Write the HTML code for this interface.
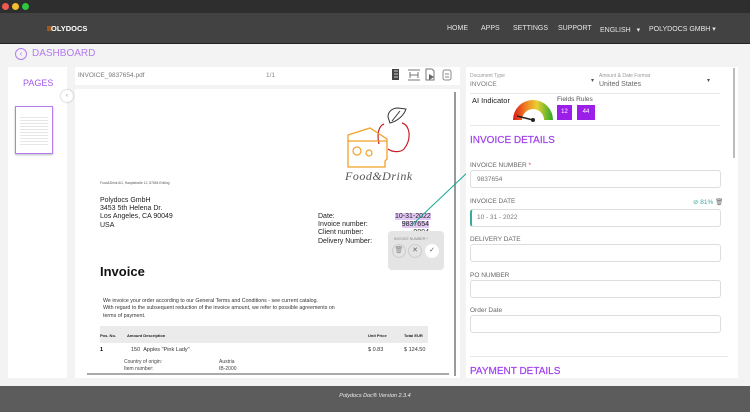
<!DOCTYPE html>
<html><head><meta charset="utf-8"><style>
*{margin:0;padding:0;box-sizing:border-box}
body{width:750px;height:412px;overflow:hidden;background:#f3f3f3;font-family:"Liberation Sans",sans-serif;position:relative}
.a{position:absolute;white-space:nowrap}
.nav{color:#e6e6e6;font-size:7px;top:25px}
.lbl{font-size:6.5px;color:#666}
.inp{position:absolute;left:470px;width:251px;height:18px;border:1px solid #ddd;border-radius:3px;background:#fff}
.dt{font-size:7px;color:#222;line-height:8.2px}
</style></head><body>
<div class="a" style="left:0;top:0;width:750px;height:13px;background:#2e2e2e"></div>
<div class="a" style="left:2px;top:3px;width:7px;height:7px;border-radius:50%;background:#ee5a52"></div>
<div class="a" style="left:12px;top:3px;width:7px;height:7px;border-radius:50%;background:#f4bf2f"></div>
<div class="a" style="left:22px;top:3px;width:7px;height:7px;border-radius:50%;background:#2fc73f"></div>
<div class="a" style="left:0;top:13px;width:750px;height:31px;background:#424242;border-bottom:1px solid #222"></div>
<div class="a" style="left:47px;top:26px;width:5px;height:5px;background:#9b5a1c"></div>
<div class="a" style="left:51px;top:24px;color:#fff;font-size:7.5px;font-weight:bold">OLYDOCS</div>
<div class="a nav" style="left:447px">HOME</div>
<div class="a nav" style="left:481px">APPS</div>
<div class="a nav" style="left:513px">SETTINGS</div>
<div class="a nav" style="left:558px">SUPPORT</div>
<div class="a nav" style="left:600px;top:26px">ENGLISH &nbsp;&nbsp;▾</div>
<div class="a nav" style="left:649px">POLYDOCS GMBH ▾</div>

<div class="a" style="left:15px;top:48px;width:12px;height:12px;border:1.3px solid #b57bf0;border-radius:50%;color:#b57bf0;font-size:8px;line-height:9px;text-align:center">‹</div>
<div class="a" style="left:32px;top:48px;color:#b57bf0;font-size:10px">DASHBOARD</div>

<div class="a" style="left:8px;top:67px;width:59px;height:311px;background:#fff"></div>
<div class="a" style="left:23px;top:78px;color:#a25bf0;font-size:9px">PAGES</div>
<div class="a" style="left:15px;top:106px;width:38px;height:48px;border:1px solid #b57bf0;background:#fff;box-shadow:0 1px 2px #bbb"></div>
<div class="a" style="left:20px;top:115px;width:28px;height:30px;background:repeating-linear-gradient(#fff 0 2px,#e6e6e6 2px 3px)"></div>
<div class="a" style="left:61px;top:90px;width:12px;height:12px;border-radius:50%;background:#fff;box-shadow:0 0 2px #aaa;color:#888;font-size:6px;text-align:center;line-height:12px">‹</div>

<div class="a" style="left:75px;top:67px;width:385px;height:18px;background:#fff"></div>
<div class="a" style="left:78px;top:72px;font-size:6.5px;color:#777">INVOICE_9837654.pdf</div>
<div class="a" style="left:266px;top:72px;font-size:6.5px;color:#888">1/1</div>
<svg class="a" style="left:391px;top:68px" width="66" height="14">
<rect x="1" y="1" width="7" height="11" fill="#444"/><path d="M3 3h4M3 6h4M3 9h4" stroke="#fff" stroke-width=".8"/>
<path d="M17 2h12M17 12h12M19 4v6M27 4v6M19 7h8" stroke="#777" stroke-width="1" fill="none"/>
<path d="M35 1h6l2 2v9h-8z" fill="none" stroke="#777"/><path d="M38 6l5 3-5 3z" fill="#666"/>
<rect x="52" y="2" width="8" height="10" rx="2" fill="none" stroke="#888"/><path d="M54 6h4M54 9h4" stroke="#888"/>
</svg>

<div class="a" style="left:75px;top:89px;width:385px;height:289px;background:#fff"></div>
<div class="a" style="left:454px;top:92px;width:2px;height:284px;background:#999"></div>
<div class="a" style="left:87px;top:373px;width:362px;height:2px;background:#aaa"></div>

<svg class="a" style="left:342px;top:105px" width="85" height="78">
<path d="M46 12c0-6 5-9 10-9l8 1c-2 6-8 12-16 14z M50 16l8-10" fill="none" stroke="#333" stroke-width="1"/>
<path d="M42 19c-6 2-7 12-5 20M60 18c8 2 10 16 2 26-4 4-12 3-16 0" fill="none" stroke="#c81e2a" stroke-width="1.2"/>
<path d="M6 30l22-7 17 11v20l-2 2v6H6z M6 36h39" fill="none" stroke="#f2a12a" stroke-width="1.3"/>
<circle cx="15" cy="46" r="4" fill="none" stroke="#f2a12a" stroke-width="1.2"/><circle cx="27" cy="48" r="3" fill="none" stroke="#f2a12a" stroke-width="1.2"/>
<text x="3" y="75" font-family="Liberation Serif,serif" font-style="italic" font-size="12" fill="#555" font-weight="normal" letter-spacing="0.5">Food&amp;Drink</text>
</svg>

<div class="a" style="left:100px;top:181px;font-size:3.3px;color:#555">Food&amp;Drink AG, Hauptstraße 12, 87654 Entling</div>
<div class="a dt" style="left:100px;top:197px">Polydocs GmbH<br>3453 5th Helena Dr.<br>Los Angeles, CA 90049<br>USA</div>
<div class="a dt" style="left:318px;top:213px">Date:<br>Invoice number:<br>Client number:<br>Delivery Number:</div>
<div class="a dt" style="left:395px;top:213px;text-align:right;width:34px"><span style="background:#e2c8f5">10-31-2022</span><br><span style="background:#e2c8f5">9837654</span><br>9994</div>
<svg class="a" style="left:410px;top:168px" width="62" height="60"><path d="M2 57L60 2" stroke="#1aa79a" stroke-width="1"/></svg>
<div class="a" style="left:388px;top:231px;width:56px;height:39px;background:#e4e4e4;border-radius:4px"></div>
<div class="a" style="left:394px;top:237px;font-size:3.6px;color:#888">INVOICE NUMBER <span style="color:#e33">*</span></div>
<div class="a" style="left:392px;top:244px;width:14px;height:14px;border-radius:50%;border:1px solid #ccc;color:#888;font-size:7px;text-align:center;line-height:12px">🗑</div>
<div class="a" style="left:408px;top:244px;width:14px;height:14px;border-radius:50%;border:1px solid #ccc;color:#666;font-size:7px;text-align:center;line-height:12px">✕</div>
<div class="a" style="left:425px;top:244px;width:14px;height:14px;border-radius:50%;background:#fff;color:#555;font-size:7px;text-align:center;line-height:14px">✓</div>

<div class="a" style="left:100px;top:264px;font-size:13px;font-weight:bold;color:#111">Invoice</div>
<div class="a" style="left:103px;top:298px;font-size:5.3px;color:#333;line-height:7.3px">We invoice your order according to our General Terms and Conditions - see current catalog.<br>With regard to the subsequent reduction of the invoice amount, we refer to possible agreements on<br>terms of payment.</div>
<div class="a" style="left:100px;top:326px;width:328px;height:17px;background:#ebebeb"></div>
<div class="a" style="left:100px;top:333px;font-size:4px;font-weight:bold;color:#222">Pos. No.</div>
<div class="a" style="left:127px;top:333px;font-size:4px;font-weight:bold;color:#222">Amount Description</div>
<div class="a" style="left:368px;top:333px;font-size:4px;font-weight:bold;color:#222">Unit Price</div>
<div class="a" style="left:404px;top:333px;font-size:4px;font-weight:bold;color:#222">Total EUR</div>
<div class="a" style="left:100px;top:347px;font-size:5.5px;font-weight:bold">1</div>
<div class="a" style="left:131px;top:347px;font-size:5.5px;color:#333">150 &nbsp;Apples "Pink Lady"</div>
<div class="a" style="left:368px;top:347px;font-size:5.5px;color:#333">$ 0.83</div>
<div class="a" style="left:404px;top:347px;font-size:5.5px;color:#333">$ 124.50</div>
<div class="a" style="left:124px;top:359px;font-size:5px;color:#444;line-height:7px">Country of origin:<br>Item number:</div>
<div class="a" style="left:219px;top:359px;font-size:5px;color:#444;line-height:7px">Austria<br>IB-2000</div>

<div class="a" style="left:466px;top:67px;width:272px;height:311px;background:#fff"></div>
<div class="a" style="left:733px;top:68px;width:2px;height:90px;background:#bbb"></div>
<div class="a" style="left:470px;top:73px;font-size:5px;color:#999">Document Type</div>
<div class="a" style="left:470px;top:81px;font-size:6.5px;color:#777">INVOICE</div>
<div class="a" style="left:591px;top:77px;font-size:6px;color:#555">▾</div>
<div class="a" style="left:599px;top:73px;font-size:5px;color:#999">Amount &amp; Date Format</div>
<div class="a" style="left:599px;top:81px;font-size:7px;color:#666">United States</div>
<div class="a" style="left:707px;top:77px;font-size:6px;color:#555">▾</div>
<div class="a" style="left:470px;top:93px;width:250px;height:1px;background:#e6e6e6"></div>
<div class="a" style="left:472px;top:96px;font-size:7.5px;color:#222">AI Indicator</div>
<svg class="a" style="left:510px;top:96px" width="46" height="26">
<defs><linearGradient id="g"><stop offset="0" stop-color="#d81818"/><stop offset=".3" stop-color="#f07a20"/><stop offset=".6" stop-color="#e8d030"/><stop offset="1" stop-color="#28a828"/></linearGradient></defs>
<path d="M3 24a20 20 0 0 1 40 0h-9a11 11 0 0 0-22 0z" fill="url(#g)"/>
<circle cx="23" cy="24" r="5" fill="#fff"/>
<path d="M7 20L23 24" stroke="#222" stroke-width="1.5"/><circle cx="23" cy="24" r="2" fill="#222"/>
</svg>
<div class="a" style="left:557px;top:96px;font-size:6.5px;color:#555">Fields Rules</div>
<div class="a" style="left:557px;top:105px;width:15px;height:15px;background:#9b1fe8;color:#fff;font-size:6px;text-align:center;line-height:15px">12</div>
<div class="a" style="left:577px;top:105px;width:18px;height:15px;background:#9b1fe8;color:#fff;font-size:6px;text-align:center;line-height:15px">44</div>
<div class="a" style="left:470px;top:125px;width:250px;height:1px;background:#e6e6e6"></div>
<div class="a" style="left:470px;top:135px;font-size:10px;color:#a03ff0;-webkit-text-stroke:0.2px #a03ff0">INVOICE DETAILS</div>
<div class="a lbl" style="left:470px;top:162px">INVOICE NUMBER <span style="color:#e33">*</span></div>
<div class="inp" style="top:170px"></div>
<div class="a" style="left:477px;top:176px;font-size:6.5px;color:#777">9837654</div>
<div class="a lbl" style="left:470px;top:198px">INVOICE DATE</div>
<div class="a" style="left:693px;top:198px;font-size:6.5px;color:#3aa9a0">⊘ 81% <span style="color:#666">🗑</span></div>
<div class="inp" style="top:209px;border-left:2px solid #3aa9a0"></div>
<div class="a" style="left:477px;top:214px;font-size:6.5px;color:#777">10 - 31 - 2022</div>
<div class="a lbl" style="left:470px;top:236px">DELIVERY DATE</div>
<div class="inp" style="top:244px"></div>
<div class="a lbl" style="left:470px;top:272px">PO NUMBER</div>
<div class="inp" style="top:280px"></div>
<div class="a lbl" style="left:470px;top:307px">Order Date</div>
<div class="inp" style="top:315px"></div>
<div class="a" style="left:470px;top:356px;width:258px;height:1px;background:#e6e6e6"></div>
<div class="a" style="left:470px;top:366px;font-size:10px;color:#a03ff0;-webkit-text-stroke:0.2px #a03ff0">PAYMENT DETAILS</div>

<div class="a" style="left:0;top:386px;width:750px;height:26px;background:#5c5c5c"></div>
<div class="a" style="left:0;top:393px;width:750px;text-align:center;font-size:5.5px;font-style:italic;color:#eee">Polydocs Doc® Version 2.3.4</div>
</body></html>
